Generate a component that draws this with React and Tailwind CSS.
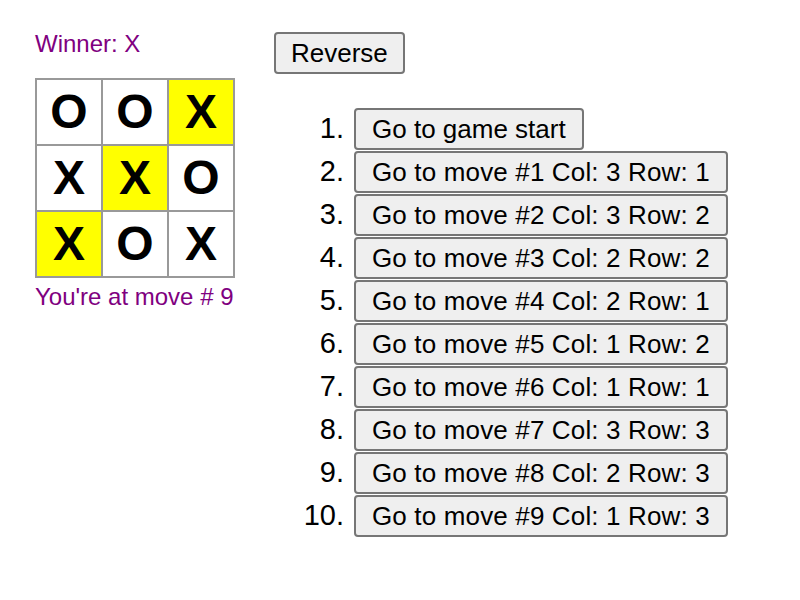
import React from "react";

const board = [
  ["O", false], ["O", false], ["X", true],
  ["X", false], ["X", true], ["O", false],
  ["X", true], ["O", false], ["X", false],
];

const moves = [
  "Go to game start",
  "Go to move #1 Col: 3 Row: 1",
  "Go to move #2 Col: 3 Row: 2",
  "Go to move #3 Col: 2 Row: 2",
  "Go to move #4 Col: 2 Row: 1",
  "Go to move #5 Col: 1 Row: 2",
  "Go to move #6 Col: 1 Row: 1",
  "Go to move #7 Col: 3 Row: 3",
  "Go to move #8 Col: 2 Row: 3",
  "Go to move #9 Col: 1 Row: 3",
];

export default function App() {
  return (
    <div
      className="flex items-start w-[800px] h-[600px] bg-white pl-[35px] pt-[30px] text-black"
      style={{ fontFamily: '"Liberation Sans", Arial, sans-serif' }}
    >
      <div className="flex flex-col w-[200px]">
        <div className="text-[24px] leading-[28px] text-[#800080]">Winner: X</div>
        <div className="mt-[20px] grid grid-cols-3 gap-[2px] p-[2px] bg-[#999999] w-[200px]">
          {board.map(([v, hl], i) => (
            <div
              key={i}
              className={
                "w-[64px] h-[64px] flex items-center justify-center text-[48px] font-bold leading-none " +
                (hl ? "bg-[#ffff00]" : "bg-white")
              }
            >
              {v}
            </div>
          ))}
        </div>
        <div className="mt-[5px] text-[24px] leading-[28px] text-[#800080] whitespace-nowrap">
          You're at move # 9
        </div>
      </div>
      <div className="ml-[39px] mt-[2px] flex flex-col items-start">
        <button className="text-[26px] leading-[30px] px-[15px] py-[4px] border-2 border-[#767676] rounded-[4px] bg-[#efefef]">
          Reverse
        </button>
        <div className="mt-[34px] flex flex-col gap-[1px]">
          {moves.map((m, i) => (
            <div key={i} className="flex items-baseline h-[42px]">
              <span className="w-[70px] text-right text-[29px] leading-[30px]">{i + 1}.</span>
              <button
                className={
                  "ml-[10px] text-[26px] leading-[30px] px-[16px] py-[4px] border-2 border-[#767676] rounded-[4px] bg-[#efefef] whitespace-nowrap " +
                  (i > 0 ? "tracking-[0.15px]" : "")
                }
              >
                {m}
              </button>
            </div>
          ))}
        </div>
      </div>
    </div>
  );
}
